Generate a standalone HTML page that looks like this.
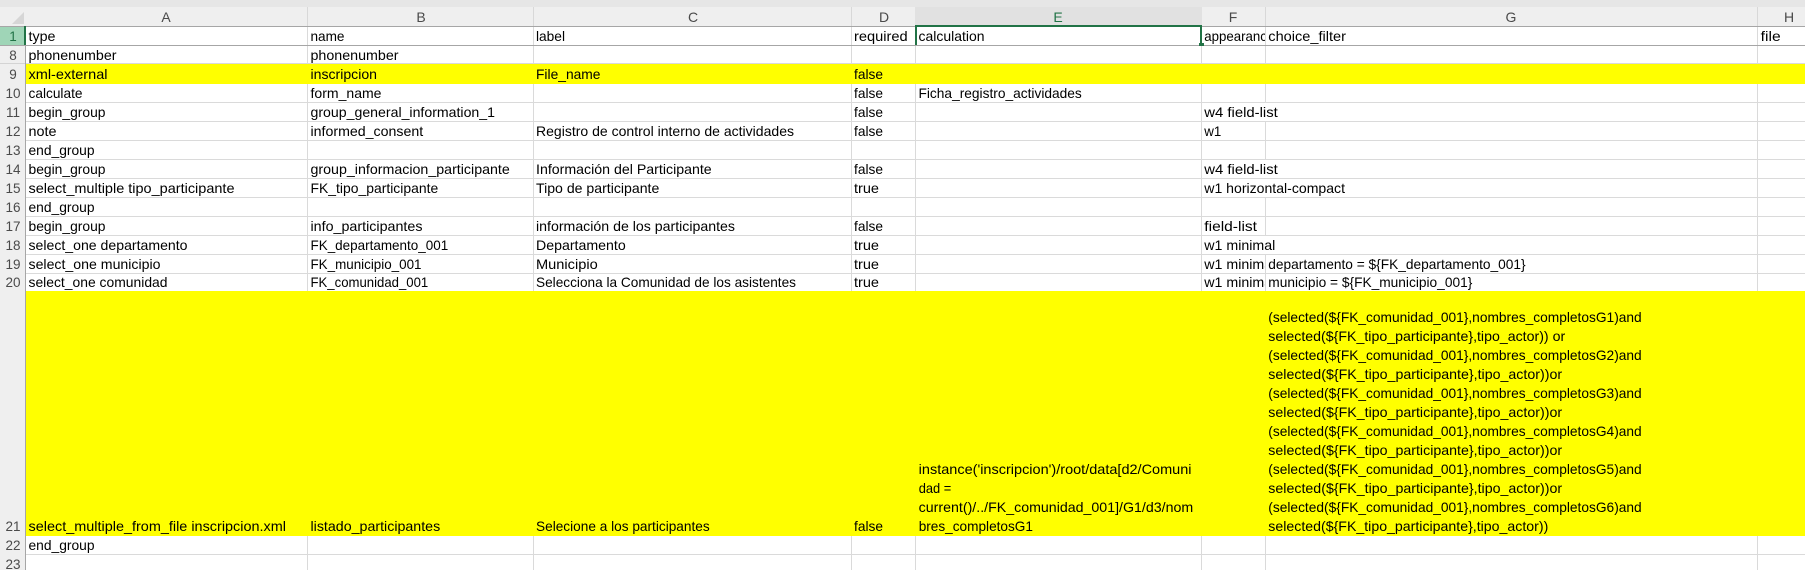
<!DOCTYPE html>
<html><head><meta charset="utf-8">
<style>
html,body{margin:0;padding:0;background:#fff}
#s{position:relative;width:1805px;height:570px;overflow:hidden;background:#fff}
.l{position:absolute;background:#dadada}
.v{top:26px;width:1px;height:544px}
.h{left:26px;width:1779px;height:1px}
.y{position:absolute;left:26px;width:1779px;background:#ff0}
.hd{position:absolute;top:7px;height:19px;background:#efefef}
.p{position:absolute;left:1265px;width:1px;height:18px;background:#fff}
svg.o{position:absolute;left:0;top:0}
text{font-family:"Liberation Sans",sans-serif;font-size:14px;fill:#000;white-space:pre}
.n{fill:#4a4a4a;text-anchor:middle;font-size:13.5px}
.m{fill:#4a4a4a;text-anchor:middle;font-size:14px}
</style></head><body><div id="s">
<div style="position:absolute;left:0;top:0;width:1805px;height:7px;background:#e6e6e6"></div>
<div style="position:absolute;left:0;top:7px;width:1805px;height:19px;background:#efefef"></div>
<div style="position:absolute;left:0;top:26px;width:25px;height:544px;background:#efefef"></div>
<svg style="position:absolute;left:11px;top:11px" width="14" height="14"><polygon points="13,1 13,13 1,13" fill="#d6d6d6"/></svg>
<div class="hd" style="left:915px;width:287px;background:#e1e1e1"></div>
<div class="l" style="left:307px;top:7px;width:1px;height:19px;background:#d8d8d8"></div>
<div class="l" style="left:533px;top:7px;width:1px;height:19px;background:#d8d8d8"></div>
<div class="l" style="left:851px;top:7px;width:1px;height:19px;background:#d8d8d8"></div>
<div class="l" style="left:1265px;top:7px;width:1px;height:19px;background:#d8d8d8"></div>
<div class="l" style="left:1757px;top:7px;width:1px;height:19px;background:#d8d8d8"></div>

<div class="l v" style="left:307px"></div>
<div class="l v" style="left:533px"></div>
<div class="l v" style="left:851px"></div>
<div class="l v" style="left:915px"></div>
<div class="l v" style="left:1201px"></div>
<div class="l v" style="left:1265px"></div>
<div class="l v" style="left:1757px"></div>

<div class="p" style="top:103px"></div>
<div class="p" style="top:160px;height:37px"></div>
<div class="p" style="top:236px"></div>

<div class="l h" style="top:63px"></div>
<div class="l h" style="top:102px"></div>
<div class="l h" style="top:121px"></div>
<div class="l h" style="top:140px"></div>
<div class="l h" style="top:159px"></div>
<div class="l h" style="top:178px"></div>
<div class="l h" style="top:197px"></div>
<div class="l h" style="top:216px"></div>
<div class="l h" style="top:235px"></div>
<div class="l h" style="top:254px"></div>
<div class="l h" style="top:273px"></div>
<div class="l h" style="top:554px"></div>

<div class="y" style="top:64px;height:20px"></div>
<div class="y" style="top:291px;height:245px"></div>

<div class="l" style="left:0;top:26px;width:1805px;height:1px;background:#a6a6a6"></div>
<div class="l" style="left:0;top:45px;width:1805px;height:1px;background:#a6a6a6"></div>
<div class="l" style="left:25px;top:26px;width:1px;height:544px;background:#a6a6a6"></div>

<div style="position:absolute;left:0;top:27px;width:25px;height:18px;background:#9fd5b7"></div>
<div style="position:absolute;left:24px;top:26px;width:2px;height:19px;background:#217346"></div>
<div class="l" style="left:0;top:63px;width:25px;height:1px;background:#d4d4d4"></div>

<svg class="o" width="1805" height="570" xmlns="http://www.w3.org/2000/svg">
<text class="m" x="166" y="22">A</text>
<text class="m" x="421" y="22">B</text>
<text class="m" x="693" y="22">C</text>
<text class="m" x="884" y="22">D</text>
<text class="m" x="1058" y="22" style="fill:#217346">E</text>
<text class="m" x="1233" y="22">F</text>
<text class="m" x="1511" y="22">G</text>
<text class="m" x="1789" y="22">H</text>

<text class="n" x="13" y="41" style="fill:#217346">1</text>
<text class="n" x="13" y="60">8</text>
<text class="n" x="13" y="79">9</text>
<text class="n" x="13" y="98">10</text>
<text class="n" x="13" y="117">11</text>
<text class="n" x="13" y="136">12</text>
<text class="n" x="13" y="155">13</text>
<text class="n" x="13" y="174">14</text>
<text class="n" x="13" y="193">15</text>
<text class="n" x="13" y="212">16</text>
<text class="n" x="13" y="231">17</text>
<text class="n" x="13" y="250">18</text>
<text class="n" x="13" y="269">19</text>
<text class="n" x="13" y="287">20</text>
<text class="n" x="13" y="531">21</text>
<text class="n" x="13" y="550">22</text>
<text class="n" x="13" y="569">23</text>

<text x="28.5" y="41" textLength="27" lengthAdjust="spacingAndGlyphs">type</text>
<text x="28.5" y="60" textLength="88" lengthAdjust="spacingAndGlyphs">phonenumber</text>
<text x="28.5" y="79" textLength="79" lengthAdjust="spacingAndGlyphs">xml-external</text>
<text x="28.5" y="98" textLength="54" lengthAdjust="spacingAndGlyphs">calculate</text>
<text x="28.5" y="117" textLength="77" lengthAdjust="spacingAndGlyphs">begin_group</text>
<text x="28.5" y="136" textLength="28" lengthAdjust="spacingAndGlyphs">note</text>
<text x="28.5" y="155" textLength="66" lengthAdjust="spacingAndGlyphs">end_group</text>
<text x="28.5" y="174" textLength="77" lengthAdjust="spacingAndGlyphs">begin_group</text>
<text x="28.5" y="193" textLength="206" lengthAdjust="spacingAndGlyphs">select_multiple tipo_participante</text>
<text x="28.5" y="212" textLength="66" lengthAdjust="spacingAndGlyphs">end_group</text>
<text x="28.5" y="231" textLength="77" lengthAdjust="spacingAndGlyphs">begin_group</text>
<text x="28.5" y="250" textLength="159" lengthAdjust="spacingAndGlyphs">select_one departamento</text>
<text x="28.5" y="269" textLength="132" lengthAdjust="spacingAndGlyphs">select_one municipio</text>
<text x="28.5" y="287" textLength="139" lengthAdjust="spacingAndGlyphs">select_one comunidad</text>
<text x="28.5" y="531" textLength="257.5" lengthAdjust="spacingAndGlyphs">select_multiple_from_file inscripcion.xml</text>
<text x="28.5" y="550" textLength="66" lengthAdjust="spacingAndGlyphs">end_group</text>

<text x="310.5" y="41" textLength="34" lengthAdjust="spacingAndGlyphs">name</text>
<text x="310.5" y="60" textLength="88" lengthAdjust="spacingAndGlyphs">phonenumber</text>
<text x="310.5" y="79" textLength="66.5" lengthAdjust="spacingAndGlyphs">inscripcion</text>
<text x="310.5" y="98" textLength="71" lengthAdjust="spacingAndGlyphs">form_name</text>
<text x="310.5" y="117" textLength="184.5" lengthAdjust="spacingAndGlyphs">group_general_information_1</text>
<text x="310.5" y="136" textLength="112.7" lengthAdjust="spacingAndGlyphs">informed_consent</text>
<text x="310.5" y="174" textLength="199.3" lengthAdjust="spacingAndGlyphs">group_informacion_participante</text>
<text x="310.5" y="193" textLength="127.7" lengthAdjust="spacingAndGlyphs">FK_tipo_participante</text>
<text x="310.5" y="231" textLength="112" lengthAdjust="spacingAndGlyphs">info_participantes</text>
<text x="310.5" y="250" textLength="137.7" lengthAdjust="spacingAndGlyphs">FK_departamento_001</text>
<text x="310.5" y="269" textLength="111" lengthAdjust="spacingAndGlyphs">FK_municipio_001</text>
<text x="310.5" y="287" textLength="117.7" lengthAdjust="spacingAndGlyphs">FK_comunidad_001</text>
<text x="310.5" y="531" textLength="129.7" lengthAdjust="spacingAndGlyphs">listado_participantes</text>

<text x="536" y="41" textLength="29" lengthAdjust="spacingAndGlyphs">label</text>
<text x="536" y="79" textLength="64.5" lengthAdjust="spacingAndGlyphs">File_name</text>
<text x="536" y="136" textLength="258" lengthAdjust="spacingAndGlyphs">Registro de control interno de actividades</text>
<text x="536" y="174" textLength="175.7" lengthAdjust="spacingAndGlyphs">Información del Participante</text>
<text x="536" y="193" textLength="123.3" lengthAdjust="spacingAndGlyphs">Tipo de participante</text>
<text x="536" y="231" textLength="199" lengthAdjust="spacingAndGlyphs">información de los participantes</text>
<text x="536" y="250" textLength="89.7" lengthAdjust="spacingAndGlyphs">Departamento</text>
<text x="536" y="269" textLength="61.7" lengthAdjust="spacingAndGlyphs">Municipio</text>
<text x="536" y="287" textLength="260" lengthAdjust="spacingAndGlyphs">Selecciona la Comunidad de los asistentes</text>
<text x="536" y="531" textLength="173.7" lengthAdjust="spacingAndGlyphs">Selecione a los participantes</text>

<text x="854" y="41" textLength="53.7" lengthAdjust="spacingAndGlyphs">required</text>
<text x="854" y="79" textLength="29" lengthAdjust="spacingAndGlyphs">false</text>
<text x="854" y="98" textLength="29" lengthAdjust="spacingAndGlyphs">false</text>
<text x="854" y="117" textLength="29" lengthAdjust="spacingAndGlyphs">false</text>
<text x="854" y="136" textLength="29" lengthAdjust="spacingAndGlyphs">false</text>
<text x="854" y="174" textLength="29" lengthAdjust="spacingAndGlyphs">false</text>
<text x="854" y="193" textLength="25" lengthAdjust="spacingAndGlyphs">true</text>
<text x="854" y="231" textLength="29" lengthAdjust="spacingAndGlyphs">false</text>
<text x="854" y="250" textLength="25" lengthAdjust="spacingAndGlyphs">true</text>
<text x="854" y="269" textLength="25" lengthAdjust="spacingAndGlyphs">true</text>
<text x="854" y="287" textLength="25" lengthAdjust="spacingAndGlyphs">true</text>
<text x="854" y="531" textLength="29" lengthAdjust="spacingAndGlyphs">false</text>

<text x="918.5" y="41" textLength="66" lengthAdjust="spacingAndGlyphs">calculation</text>
<text x="918.5" y="98" textLength="163.3" lengthAdjust="spacingAndGlyphs">Ficha_registro_actividades</text>
<text x="918.7" y="474" textLength="272.8" lengthAdjust="spacingAndGlyphs">instance('inscripcion')/root/data[d2/Comuni</text>
<text x="918.7" y="493" textLength="32.6" lengthAdjust="spacingAndGlyphs">dad =</text>
<text x="918.7" y="512" textLength="274.5" lengthAdjust="spacingAndGlyphs">current()/../FK_comunidad_001]/G1/d3/nom</text>
<text x="918.7" y="531" textLength="114.3" lengthAdjust="spacingAndGlyphs">bres_completosG1</text>

<svg x="1202" y="27" width="63" height="18"><text x="2.3" y="14" textLength="70" lengthAdjust="spacingAndGlyphs">appearance</text></svg>
<text x="1204.3" y="117" textLength="73.5" lengthAdjust="spacingAndGlyphs">w4 field-list</text>
<text x="1204.3" y="136" textLength="17" lengthAdjust="spacingAndGlyphs">w1</text>
<text x="1204.3" y="174" textLength="73.5" lengthAdjust="spacingAndGlyphs">w4 field-list</text>
<text x="1204.3" y="193" textLength="140.7" lengthAdjust="spacingAndGlyphs">w1 horizontal-compact</text>
<text x="1204.3" y="231" textLength="52.7" lengthAdjust="spacingAndGlyphs">field-list</text>
<text x="1204.3" y="250" textLength="71" lengthAdjust="spacingAndGlyphs">w1 minimal</text>
<svg x="1202" y="255" width="63" height="18"><text x="2.3" y="14" textLength="71" lengthAdjust="spacingAndGlyphs">w1 minimal</text></svg>
<svg x="1202" y="274" width="63" height="17"><text x="2.3" y="13" textLength="71" lengthAdjust="spacingAndGlyphs">w1 minimal</text></svg>

<text x="1268.3" y="41" textLength="77.7" lengthAdjust="spacingAndGlyphs">choice_filter</text>
<text x="1268.3" y="269" textLength="257.3" lengthAdjust="spacingAndGlyphs">departamento = ${FK_departamento_001}</text>
<text x="1268.3" y="287" textLength="204" lengthAdjust="spacingAndGlyphs">municipio = ${FK_municipio_001}</text>
<text x="1268.3" y="322" textLength="373.4" lengthAdjust="spacingAndGlyphs">(selected(${FK_comunidad_001},nombres_completosG1)and</text>
<text x="1268.3" y="341" textLength="296.9" lengthAdjust="spacingAndGlyphs">selected(${FK_tipo_participante},tipo_actor)) or</text>
<text x="1268.3" y="360" textLength="373.4" lengthAdjust="spacingAndGlyphs">(selected(${FK_comunidad_001},nombres_completosG2)and</text>
<text x="1268.3" y="379" textLength="293.8" lengthAdjust="spacingAndGlyphs">selected(${FK_tipo_participante},tipo_actor))or</text>
<text x="1268.3" y="398" textLength="373.4" lengthAdjust="spacingAndGlyphs">(selected(${FK_comunidad_001},nombres_completosG3)and</text>
<text x="1268.3" y="417" textLength="293.8" lengthAdjust="spacingAndGlyphs">selected(${FK_tipo_participante},tipo_actor))or</text>
<text x="1268.3" y="436" textLength="373.4" lengthAdjust="spacingAndGlyphs">(selected(${FK_comunidad_001},nombres_completosG4)and</text>
<text x="1268.3" y="455" textLength="293.8" lengthAdjust="spacingAndGlyphs">selected(${FK_tipo_participante},tipo_actor))or</text>
<text x="1268.3" y="474" textLength="373.4" lengthAdjust="spacingAndGlyphs">(selected(${FK_comunidad_001},nombres_completosG5)and</text>
<text x="1268.3" y="493" textLength="293.8" lengthAdjust="spacingAndGlyphs">selected(${FK_tipo_participante},tipo_actor))or</text>
<text x="1268.3" y="512" textLength="373.4" lengthAdjust="spacingAndGlyphs">(selected(${FK_comunidad_001},nombres_completosG6)and</text>
<text x="1268.3" y="531" textLength="280" lengthAdjust="spacingAndGlyphs">selected(${FK_tipo_participante},tipo_actor))</text>

<text x="1760.7" y="41" textLength="20" lengthAdjust="spacingAndGlyphs">file</text>
</svg>

<div style="position:absolute;left:915px;top:25px;width:283px;height:18px;border:2px solid #217346;border-bottom:0"></div>
<div style="position:absolute;left:1199px;top:43px;width:5px;height:3px;background:#217346"></div>
</div></body></html>
